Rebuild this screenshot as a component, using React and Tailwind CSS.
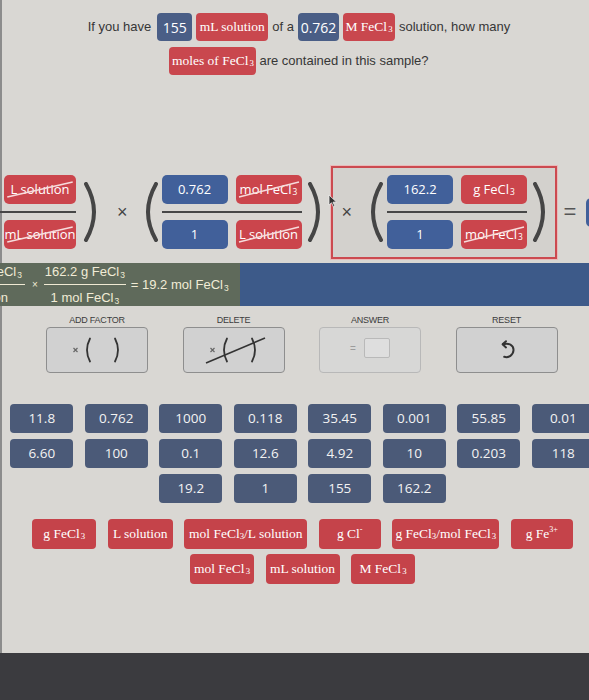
import React from 'react';

const sans = "font-['Liberation_Sans',Arial,sans-serif]";
const open = "font-['Open_Sans',Arial,sans-serif]";
const serif = "font-['Liberation_Serif','Times_New_Roman',serif]";

const FeCl3 = () => (
  <>
    FeCl<sub className="text-[0.65em] ml-[1px]">3</sub>
  </>
);

const Strike = () => (
  <svg className="absolute inset-0 w-full h-full" viewBox="0 0 66 29" preserveAspectRatio="none">
    <line x1="3" y1="22" x2="63" y2="7" stroke="#f7dcdc" strokeWidth="1.4" />
  </svg>
);

const Chip = ({ blue, w = 'w-[66px]', struck, children }) => (
  <div
    className={`relative ${w} h-[29px] shrink-0 rounded-[5px] flex items-center justify-center text-white text-[13px] whitespace-nowrap ${open} ${
      blue ? 'bg-[#41609a]' : 'bg-[#cb454c]'
    }`}
  >
    {children}
    {struck && <Strike />}
  </div>
);

const Fraction = ({ top, bottom, className = '' }) => (
  <div className={`flex flex-col gap-[7px] shrink-0 ${className}`}>
    <div className="flex gap-[8px]">{top}</div>
    <div className="h-[2px] bg-[#474747]" />
    <div className="flex gap-[8px]">{bottom}</div>
  </div>
);

const Paren = ({ right, className = '' }) => (
  <svg width="14" height="60" viewBox="0 0 14 60" className={`shrink-0 ${className}`}>
    <path
      d={right ? 'M3 2 Q19 30 3 58' : 'M11 2 Q-5 30 11 58'}
      fill="none"
      stroke="#454545"
      strokeWidth="4"
      strokeLinecap="round"
    />
  </svg>
);

const SmallFrac = ({ top, bottom, className = '' }) => (
  <div className={`flex flex-col items-center shrink-0 whitespace-nowrap leading-[14px] ${className}`}>
    <div>{top}</div>
    <div className="mt-[5px] mb-[6px] h-px w-full bg-[#efe9d3]" />
    <div>{bottom}</div>
  </div>
);

const ParenIcon = ({ strike }) => (
  <svg width="64" height="30" viewBox="0 0 64 30">
    <path d="M8.5 13 L12.5 17 M12.5 13 L8.5 17" stroke="#666" strokeWidth="1.2" />
    <path d="M25 3.5 Q19 15 25 26.5" fill="none" stroke="#333" strokeWidth="1.8" strokeLinecap="round" />
    <path d="M50 3.5 Q56 15 50 26.5" fill="none" stroke="#333" strokeWidth="1.8" strokeLinecap="round" />
    {strike && <path d="M4 28 L63 3" stroke="#333" strokeWidth="1.5" />}
  </svg>
);

const ResetIcon = () => (
  <svg width="24" height="24" viewBox="0 0 24 24">
    <path
      d="M8 6.3 C13.5 4.3 18.8 7.3 18.5 12.3 C18.2 17 13.8 20.2 9.2 18.8"
      fill="none"
      stroke="#333"
      strokeWidth="2"
      strokeLinecap="round"
    />
    <path d="M11 3.2 L7.6 6.3 L11 9.4" fill="none" stroke="#333" strokeWidth="2" strokeLinecap="round" strokeLinejoin="round" />
  </svg>
);

const Control = ({ label, faded, children }) => (
  <div className="w-[102px] flex flex-col items-center shrink-0">
    <div className={`text-[9px] leading-[12px] tracking-tight text-[#3c3c3c] ${sans}`}>{label}</div>
    <div
      className={`mt-[1px] w-full h-[46px] rounded-[4px] border flex items-center justify-center ${
        faded ? 'border-[#b8b8b8] bg-[#d7d7d6]' : 'border-[#8e8e8e] bg-[#d1d1d1]'
      }`}
    >
      {children}
    </div>
  </div>
);

const numbers = ['11.8', '0.762', '1000', '0.118', '35.45', '0.001', '55.85', '0.01', '6.60', '100', '0.1', '12.6', '4.92', '10', '0.203', '118', '19.2', '1', '155', '162.2'];

const units = [
  { w: 'w-[64px]', label: <>g <FeCl3 /></> },
  { w: 'w-[65px]', label: 'L solution' },
  { w: 'w-[123px]', label: <>mol FeCl<sub className="text-[0.65em]">3</sub>/L solution</> },
  { w: 'w-[62px]', label: <>g Cl<sup className="text-[0.6em]">-</sup></> },
  { w: 'w-[107px]', label: <>g FeCl<sub className="text-[0.65em]">3</sub>/mol <FeCl3 /></> },
  { w: 'w-[62px]', label: <>g Fe<sup className="text-[0.6em]">3+</sup></> },
  { w: 'w-[64px]', label: <>mol <FeCl3 /></> },
  { w: 'w-[74px]', label: 'mL solution' },
  { w: 'w-[64px]', label: <>M <FeCl3 /></> },
];

export default function App() {
  return (
    <div className="w-[589px] h-[700px] overflow-hidden flex flex-col bg-[#d9d7d3] shadow-[inset_2px_0_0_#8c8c8c]">
      {/* question */}
      <div className={`pt-[13px] pl-[9px] flex flex-col items-center text-[13px] text-[#363636] shrink-0 ${sans}`}>
        <div className="flex items-center gap-[4px] h-[28px] whitespace-nowrap">
          <span className="mr-[2px]">If you have</span>
          <span className={`w-[35px] h-[28px] rounded-[4px] bg-[#4a5e86] text-white text-[14px] flex items-center justify-center ${open}`}>155</span>
          <span className={`w-[72px] h-[28px] rounded-[4px] bg-[#c9474e] text-white text-[13.5px] flex items-center justify-center ${serif}`}>mL solution</span>
          <span>of a</span>
          <span className={`w-[41px] h-[28px] rounded-[4px] bg-[#4a5e86] text-white text-[14px] flex items-center justify-center ${open}`}>0.762</span>
          <span className={`w-[52px] h-[28px] rounded-[4px] bg-[#c9474e] text-white text-[13.5px] flex items-center justify-center ${serif}`}>M <FeCl3 /></span>
          <span>solution, how many</span>
        </div>
        <div className="mt-[6px] flex items-center gap-[3px] h-[28px] whitespace-nowrap">
          <span className={`w-[87px] h-[28px] rounded-[4px] bg-[#c9474e] text-white text-[13.5px] flex items-center justify-center ${serif}`}>moles of <FeCl3 /></span>
          <span>are contained in this sample?</span>
        </div>
      </div>

      {/* equation */}
      <div className={`relative mt-[86px] h-[102px] flex items-center shrink-0 text-[#444] ${sans}`}>
        <Fraction
          className="-ml-[72px] px-[2px]"
          top={[<Chip blue key="a">1</Chip>, <Chip key="b" w="w-[72px]" struck>L solution</Chip>]}
          bottom={[<Chip blue key="c">1000</Chip>, <Chip key="d" w="w-[72px]" struck>mL solution</Chip>]}
        />
        <Paren right className="ml-[5px]" />
        <div className="ml-[11px] w-px self-stretch bg-[#cac8c4]" />
        <span className="ml-[9px] text-[18px] leading-none">×</span>
        <Paren className="ml-[17px]" />
        <Fraction
          className="px-[3px]"
          top={[<Chip blue key="a">0.762</Chip>, <Chip key="b" struck>mol <FeCl3 /></Chip>]}
          bottom={[<Chip blue key="c">1</Chip>, <Chip key="d" struck>L solution</Chip>]}
        />
        <Paren right className="ml-[2px]" />
        <div className="ml-[10px] w-[226px] h-[93px] shrink-0 border-[2px] border-[#cc4a50] outline outline-1 outline-[#e9b9b9] bg-[#d3d1cd] flex items-center">
          <span className="ml-[9px] text-[18px] leading-none">×</span>
          <Paren className="ml-[18px]" />
          <Fraction
            className="px-[3px]"
            top={[<Chip blue key="a">162.2</Chip>, <Chip key="b">g <FeCl3 /></Chip>]}
            bottom={[<Chip blue key="c">1</Chip>, <Chip key="d" struck>mol <FeCl3 /></Chip>]}
          />
          <Paren right className="ml-[2px]" />
        </div>
        <span className="ml-[7px] text-[22px] leading-none text-[#555]">=</span>
        <div className="ml-[10px] w-[66px] h-[29px] shrink-0 rounded-[5px] bg-[#41609a]" />
        <svg className="absolute left-[328px] top-[33px]" width="10" height="14" viewBox="0 0 10 14">
          <path d="M1 1 L1 11 L3.5 8.8 L5.5 13 L7 12.3 L5 8.2 L8.5 8 Z" fill="#333" stroke="#eee" strokeWidth="0.8" />
        </svg>
      </div>

      {/* result band */}
      <div className={`h-[43px] flex shrink-0 text-[13px] text-[#f1ecd6] ${sans}`}>
        <div className="w-[240px] bg-[#5f6a5b] flex items-center overflow-hidden">
          <SmallFrac className="-ml-[75px] w-[100px]" top={<>0.762 mol <FeCl3 /></>} bottom="1 L solution" />
          <span className="ml-[7px] text-[10px]">×</span>
          <SmallFrac className="ml-[6px] w-[82px]" top={<>162.2 g <FeCl3 /></>} bottom={<>1 mol <FeCl3 /></>} />
          <span className="ml-[5px] whitespace-nowrap">= 19.2 mol <FeCl3 /></span>
        </div>
        <div className="flex-1 bg-[#3d5a89]" />
      </div>

      {/* controls */}
      <div className="mt-[8px] ml-[46px] flex gap-[34.5px] shrink-0">
        <Control label="ADD FACTOR">
          <ParenIcon />
        </Control>
        <Control label="DELETE">
          <ParenIcon strike />
        </Control>
        <Control label="ANSWER" faded>
          <div className="flex items-center gap-[8px] -mt-[4px]">
            <span className={`text-[10px] text-[#9c9c9c] ${sans}`}>=</span>
            <div className="w-[26px] h-[20px] rounded-[2px] border border-[#b9b9b9] bg-[#dedede]" />
          </div>
        </Control>
        <Control label="RESET">
          <ResetIcon />
        </Control>
      </div>

      {/* numbers */}
      <div className="mt-[31px] ml-[10px] w-[585px] flex flex-wrap justify-center gap-x-[11.5px] gap-y-[6px] shrink-0">
        {numbers.map((n, i) => (
          <div
            key={i}
            className={`w-[63px] h-[29px] rounded-[4px] bg-[#4b5a78] text-[#f3f3f3] text-[13.5px] flex items-center justify-center ${open}`}
          >
            {n}
          </div>
        ))}
      </div>

      {/* units */}
      <div className="mt-[16px] ml-[10px] w-[585px] flex flex-wrap justify-center gap-x-[11.5px] gap-y-[5px] shrink-0">
        {units.map((u, i) => (
          <div
            key={i}
            className={`${u.w} h-[30px] rounded-[4px] bg-[#c5434a] text-white text-[13.5px] whitespace-nowrap flex items-center justify-center ${serif}`}
          >
            {u.label}
          </div>
        ))}
      </div>

      <div className="mt-auto h-[47px] bg-[#3b3b3f] shrink-0" />
    </div>
  );
}
